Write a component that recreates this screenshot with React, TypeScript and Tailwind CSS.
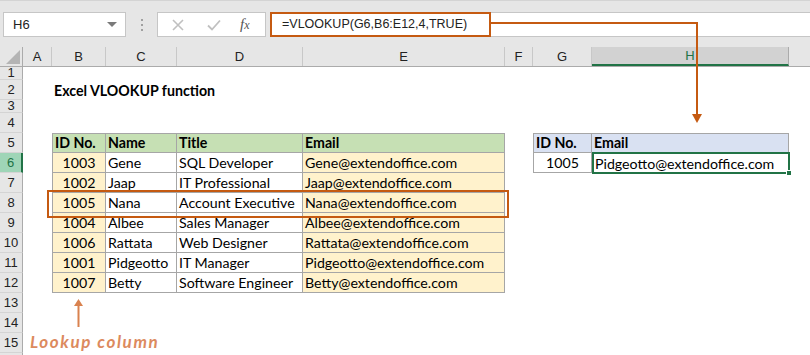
import React from "react";

const COLS = [
  { key: "A", w: 29 },
  { key: "B", w: 54 },
  { key: "C", w: 71 },
  { key: "D", w: 126 },
  { key: "E", w: 202 },
  { key: "F", w: 28 },
  { key: "G", w: 59 },
  { key: "H", w: 197 },
  { key: "I", w: 40 },
];

const ROWS: { n: number; h: number }[] = [
  { n: 1, h: 13 },
  { n: 2, h: 20 },
  { n: 3, h: 13 },
  { n: 4, h: 20 },
  ...[5, 6, 7, 8, 9, 10, 11, 12, 13, 14, 15, 16].map((n) => ({ n, h: 20 })),
];

const DATA = [
  ["1003", "Gene", "SQL Developer", "Gene@extendoffice.com"],
  ["1002", "Jaap", "IT Professional", "Jaap@extendoffice.com"],
  ["1005", "Nana", "Account Executive", "Nana@extendoffice.com"],
  ["1004", "Albee", "Sales Manager", "Albee@extendoffice.com"],
  ["1006", "Rattata", "Web Designer", "Rattata@extendoffice.com"],
  ["1001", "Pidgeotto", "IT Manager", "Pidgeotto@extendoffice.com"],
  ["1007", "Betty", "Software Engineer", "Betty@extendoffice.com"],
];

const cellFont = { fontFamily: "Lato, 'Liberation Sans', sans-serif" };

function Cell({ col, row }: { col: string; row: number }) {
  const base =
    "h-full shrink-0 flex items-end pb-[1px] overflow-visible whitespace-nowrap text-[14.2px] leading-[17px] text-black";
  const w = COLS.find((c) => c.key === col)!.w;
  const style = { width: w, ...cellFont };
  if (row >= 5 && row <= 12 && ["B", "C", "D", "E"].includes(col)) {
    const ci = ["B", "C", "D", "E"].indexOf(col);
    const edges = `border-r border-b border-[#a6a6a6] ${ci === 0 ? "border-l" : ""} ${row === 5 ? "border-t" : ""}`;
    if (row === 5) {
      const labels = ["ID No.", "Name", "Title", "Email"];
      return (
        <div className={`${base} ${edges} bg-[#c6e0b4] font-bold pl-[2px]`} style={style}>
          {labels[ci]}
        </div>
      );
    }
    const d = DATA[row - 6];
    const bg = ci === 0 || ci === 3 ? "bg-[#fff2cc]" : "bg-white";
    return (
      <div className={`${base} ${edges} ${bg} ${ci === 0 ? "justify-center" : "pl-[2px]"}`} style={style}>
        {d[ci]}
      </div>
    );
  }
  if ((row === 5 || row === 6) && (col === "G" || col === "H")) {
    const edges = `border-r border-b border-[#a6a6a6] ${col === "G" ? "border-l" : ""} ${row === 5 ? "border-t" : ""}`;
    if (row === 5) {
      return (
        <div className={`${base} ${edges} bg-[#d9e1f2] font-bold pl-[2px]`} style={style}>
          {col === "G" ? "ID No." : "Email"}
        </div>
      );
    }
    if (col === "G") {
      return (
        <div className={`${base} ${edges} justify-center bg-white`} style={style}>
          1005
        </div>
      );
    }
    return (
      <div className={`${base} relative bg-white`} style={style}>
        <div className="absolute left-[0px] top-[-1px] right-[-1px] bottom-[-1px] border-2 border-[#217346]" />
        <div className="absolute right-[-3px] bottom-[-3px] w-[6px] h-[6px] bg-[#217346] border border-white" />
        <span className="pl-[3px]">Pidgeotto@extendoffice.com</span>
      </div>
    );
  }
  if (row === 2 && col === "B") {
    return (
      <div className={`${base} font-bold pl-[2px]`} style={style}>
        Excel VLOOKUP function
      </div>
    );
  }
  return <div className={base} style={style} />;
}

export default function App() {
  const hdrFont = { fontFamily: "'Liberation Sans', Arial, sans-serif" };
  return (
    <div className="relative w-[810px] h-[355px] overflow-hidden bg-white">
      {/* Toolbar */}
      <div className="h-[47px] bg-[#e6e6e6] border-t border-[#d4d4d4] flex items-start pt-[11px]" style={hdrFont}>
        <div className="ml-[3px] w-[123px] h-[25px] bg-white border border-[#c6c6c6] flex items-center justify-between pl-[9px] pr-[8px]">
          <span className="text-[13px] text-[#222]">H6</span>
          <span className="w-0 h-0 border-l-[5px] border-r-[5px] border-t-[5px] border-l-transparent border-r-transparent border-t-[#7a7a7a]" />
        </div>
        <div className="w-[31px] h-[25px] flex flex-col items-center justify-center gap-[3px]">
          <span className="w-[2px] h-[2px] bg-[#a0a0a0]" />
          <span className="w-[2px] h-[2px] bg-[#a0a0a0]" />
          <span className="w-[2px] h-[2px] bg-[#a0a0a0]" />
        </div>
        <div className="w-[109px] h-[25px] bg-white border border-[#c6c6c6] flex items-center">
          <svg width="14" height="14" viewBox="0 0 14 14" className="ml-[13px]">
            <path d="M2 2 L12 12 M12 2 L2 12" stroke="#c0c0c0" strokeWidth="1.6" fill="none" />
          </svg>
          <svg width="16" height="14" viewBox="0 0 16 14" className="ml-[21px]">
            <path d="M2 7.5 L6 11.5 L14 2.5" stroke="#c0c0c0" strokeWidth="1.8" fill="none" />
          </svg>
          <span className="ml-[18px] text-[15px] italic text-[#555]" style={{ fontFamily: "'Liberation Serif', serif" }}>
            f<span className="text-[12px]">x</span>
          </span>
        </div>
        <div className="ml-[4px] flex-1 h-[25px] bg-white border-y border-[#c6c6c6] flex">
          <div className="w-[221px] h-[25px] -mt-[1px] border-2 border-[#c55a11] flex items-center pl-[10px] text-[12.5px] text-[#222] whitespace-nowrap">
            =VLOOKUP(G6,B6:E12,4,TRUE)
          </div>
        </div>
      </div>

      {/* Column headers */}
      <div className="h-[20px] flex bg-[#e6e6e6] border-b border-[#ababab]" style={hdrFont}>
        <div className="w-[23px] shrink-0 h-full relative border-r border-[#ababab]">
          <svg className="absolute right-[2px] bottom-[2px]" width="14" height="14" viewBox="0 0 14 14">
            <path d="M14 0 L14 14 L0 14 Z" fill="#b4b4b4" />
          </svg>
        </div>
        {COLS.map((c) => (
          <div
            key={c.key}
            className={`shrink-0 h-full flex items-center justify-center text-[13px] border-r ${
              c.key === "H"
                ? "bg-[#d2d2d2] text-[#217346] border-b-2 border-b-[#217346] border-r-[#ababab]"
                : "text-[#222] border-[#c8c8c8]"
            }`}
            style={{ width: c.w }}
          >
            {c.key === "I" ? "" : c.key}
          </div>
        ))}
      </div>

      {/* Rows */}
      {ROWS.map((r) => (
        <div key={r.n} className="flex" style={{ height: r.h }}>
          <div
            className={`w-[23px] shrink-0 h-full flex items-center justify-center text-[13px] border-b border-[#d4d4d4] ${
              r.n === 6
                ? "bg-[#9fd5b7] text-[#217346] border-r-2 border-r-[#217346]"
                : "bg-[#e6e6e6] text-[#222] border-r border-r-[#ababab]"
            }`}
            style={hdrFont}
          >
            {r.n === 16 ? "" : r.n}
          </div>
          {COLS.map((c) => (
            <Cell key={c.key} col={c.key} row={r.n} />
          ))}
        </div>
      ))}

      {/* Overlays: highlight box on row 8 */}
      <div className="absolute left-[47px] top-[190px] w-[462px] h-[28px] border-2 border-[#c55a11]" />

      {/* Connector from formula to H */}
      <div className="absolute left-[491px] top-[22px] w-[207px] h-[2px] bg-[#c55a11]" />
      <div className="absolute left-[696px] top-[22px] w-[2px] h-[94px] bg-[#c55a11]" />
      <svg className="absolute left-[692px] top-[114px]" width="10" height="10" viewBox="0 0 10 10">
        <path d="M0 0 L10 0 L5 9 Z" fill="#c55a11" />
      </svg>

      {/* Lookup arrow */}
      <svg className="absolute left-[73px] top-[299px]" width="11" height="30" viewBox="0 0 11 30">
        <path d="M5.5 0 L10 7 L1 7 Z" fill="#d9824f" />
        <rect x="4.5" y="6" width="2" height="22" fill="#d9824f" />
      </svg>
      <div
        className="absolute left-[30px] top-[329px] text-[17px] font-bold italic tracking-[1.6px] text-[#dc8a5e] whitespace-nowrap"
        style={{ fontFamily: "Lato, 'Liberation Sans', sans-serif" }}
      >
        Lookup column
      </div>
    </div>
  );
}
